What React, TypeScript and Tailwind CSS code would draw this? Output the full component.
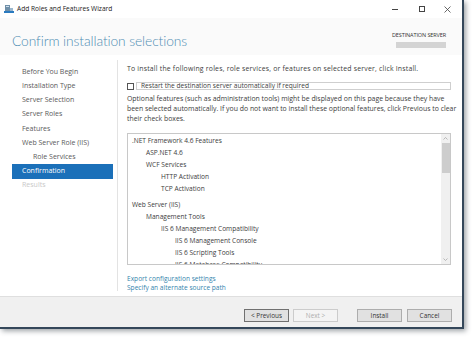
const navItems = [
  { label: 'Before You Begin', indent: false, state: 'normal' },
  { label: 'Installation Type', indent: false, state: 'normal' },
  { label: 'Server Selection', indent: false, state: 'normal' },
  { label: 'Server Roles', indent: false, state: 'normal' },
  { label: 'Features', indent: false, state: 'normal' },
  { label: 'Web Server Role (IIS)', indent: false, state: 'normal' },
  { label: 'Role Services', indent: true, state: 'normal' },
  { label: 'Confirmation', indent: false, state: 'active' },
  { label: 'Results', indent: false, state: 'disabled' },
]

const groups = [
  [
    { text: '.NET Framework 4.6 Features', level: 0 },
    { text: 'ASP.NET 4.6', level: 1 },
    { text: 'WCF Services', level: 1 },
    { text: 'HTTP Activation', level: 2 },
    { text: 'TCP Activation', level: 2 },
  ],
  [
    { text: 'Web Server (IIS)', level: 0 },
    { text: 'Management Tools', level: 1 },
    { text: 'IIS 6 Management Compatibility', level: 2 },
    { text: 'IIS 6 Management Console', level: 3 },
    { text: 'IIS 6 Scripting Tools', level: 3 },
    { text: 'IIS 6 Metabase Compatibility', level: 3 },
  ],
]

const indents = ['pl-[4px]', 'pl-[18px]', 'pl-[33px]', 'pl-[47px]']

function WizardIcon() {
  return (
    <svg width="10" height="10" viewBox="0 0 10 10">
      <rect x="1" y="1" width="5" height="6" fill="#6f8fa8" />
      <rect x="2" y="2" width="3" height="1" fill="#cfe0ee" />
      <rect x="0" y="7" width="10" height="2" fill="#2b7bc0" />
      <rect x="6" y="4" width="3" height="3" fill="#9bb8cf" />
    </svg>
  )
}

function Btn({ label, variant }: { label: string; variant: 'focus' | 'disabled' | 'normal' }) {
  const cls =
    variant === 'focus'
      ? 'border-[#707070] bg-[#e1e1e1] text-[#333]'
      : variant === 'disabled'
        ? 'border-[#cccccc] bg-[#f4f4f4] text-[#adadad]'
        : 'border-[#adadad] bg-[#e1e1e1] text-[#333]'
  return (
    <div className={`h-[13px] w-[45px] border flex items-center justify-center text-[6.4px] ${cls}`}>
      {label}
    </div>
  )
}

export default function App() {
  return (
    <div className="w-[474px] h-[339px] bg-white overflow-hidden" style={{ fontFamily: '"Open Sans", "Noto Sans", sans-serif' }}>
      <div className="w-[464px] h-[329px] flex flex-col bg-white border-r-2 border-b-2 border-[#34475a] shadow-[2px_2px_5px_rgba(40,50,60,0.45)]">

        {/* title bar */}
        <div className="h-[18px] flex items-center pl-[4px] text-[#1a1a1a]">
          <WizardIcon />
          <span className="ml-[3px] text-[6.6px]">Add Roles and Features Wizard</span>
          <div className="ml-auto flex items-center h-full text-[#333]">
            <div className="w-[27px] flex justify-center">
              <div className="w-[6px] h-px bg-[#444]" />
            </div>
            <div className="w-[27px] flex justify-center">
              <div className="w-[6px] h-[6px] border border-[#444]" />
            </div>
            <div className="w-[27px] flex justify-center pr-[2px]">
              <svg width="7" height="7" viewBox="0 0 7 7">
                <path d="M0.5 0.5L6.5 6.5M6.5 0.5L0.5 6.5" stroke="#444" strokeWidth="0.8" />
              </svg>
            </div>
          </div>
        </div>

        {/* header */}
        <div className="h-[37px] bg-[#fafafa] flex items-start pl-[12px] pr-[16px]">
          <div className="mt-[16px] text-[13.8px] font-light text-[#4f8db3] leading-none tracking-[-0.1px]" style={{ fontFamily: 'Lato, sans-serif' }}>
            Confirm installation selections
          </div>
          <div className="ml-auto mt-[15px] flex flex-col items-end">
            <div className="text-[5.5px] text-[#333] leading-none tracking-[-0.1px]">DESTINATION SERVER</div>
            <div className="mt-[3px] w-[50px] h-[6px] bg-[#d4d4d4]" />
          </div>
        </div>

        {/* body */}
        <div className="flex-1 flex min-h-0">
          <div className="w-[118px] shrink-0 pt-[5px] my-[5px] border-r border-[#e3e3e3]">
            {navItems.map(item => (
              <div
                key={item.label}
                className={`h-[14.2px] ml-[12px] w-[101px] flex items-center text-[7px] whitespace-nowrap ${
                  item.indent ? 'pl-[21px]' : 'pl-[10px]'
                } ${
                  item.state === 'active'
                    ? 'bg-[#1b70b9] text-white'
                    : item.state === 'disabled'
                      ? 'text-[#c8c8c8]'
                      : 'text-[#5a5a5a]'
                }`}
              >
                {item.label}
              </div>
            ))}
          </div>

          <div className="flex-1 min-w-0 pl-[9px] pr-[11px] pt-[9px] text-[6.6px] text-[#3c3c3c]">
            <div className="h-[10px] flex items-center whitespace-nowrap text-[6.9px] tracking-[0.2px]">
              To install the following roles, role services, or features on selected server, click Install.
            </div>
            <div className="mt-[8px] h-[8px] flex items-center">
              <div className="w-[7px] h-[7px] shrink-0 border border-[#555] bg-white" />
              <div className="ml-[2px] flex-1 h-[8px] border border-[#cfcfcf] flex items-center pl-[4px] whitespace-nowrap">
                Restart the destination server automatically if required
              </div>
            </div>
            <div className="mt-[4px] leading-[9.8px] whitespace-nowrap text-[6.9px]">
              <div>Optional features (such as administration tools) might be displayed on this page because they have</div>
              <div>been selected automatically. If you do not want to install these optional features, click Previous to clear</div>
              <div>their check boxes.</div>
            </div>

            <div className="mt-[10px] h-[132px] border border-[#c8c8c8] flex overflow-hidden">
              <div className="flex-1 pt-[1px] overflow-hidden">
                {groups.map((g, gi) => (
                  <div key={gi} className={gi > 0 ? 'mt-[4px]' : ''}>
                    {g.map(row => (
                      <div key={row.text} className={`h-[12px] flex items-center whitespace-nowrap ${indents[row.level]}`}>
                        {row.text}
                      </div>
                    ))}
                  </div>
                ))}
              </div>
              <div className="w-[9px] shrink-0 bg-[#f0f0f0] flex flex-col items-center">
                <div className="h-[9px] flex items-center justify-center">
                  <svg width="5" height="3" viewBox="0 0 5 3">
                    <path d="M0.5 2.5L2.5 0.5L4.5 2.5" stroke="#a0a0a0" strokeWidth="0.7" fill="none" />
                  </svg>
                </div>
                <div className="w-[8px] h-[30px] bg-[#cdcdcd]" />
                <div className="mt-auto h-[9px] flex items-center justify-center">
                  <svg width="5" height="3" viewBox="0 0 5 3">
                    <path d="M0.5 0.5L2.5 2.5L4.5 0.5" stroke="#a0a0a0" strokeWidth="0.7" fill="none" />
                  </svg>
                </div>
              </div>
            </div>

            <div className="mt-[9px] leading-[9px] text-[#3485ad]">
              <div>Export configuration settings</div>
              <div>Specify an alternate source path</div>
            </div>
          </div>
        </div>

        {/* footer */}
        <div className="h-[31px] bg-[#f0f0f0] border-t border-[#dfdfdf] flex items-start justify-end pt-[12px] pr-[10px]">
          <Btn label="< Previous" variant="focus" />
          <div className="ml-[4px]"><Btn label="Next >" variant="disabled" /></div>
          <div className="ml-[19px]"><Btn label="Install" variant="normal" /></div>
          <div className="ml-[5px]"><Btn label="Cancel" variant="normal" /></div>
        </div>
      </div>
    </div>
  )
}
